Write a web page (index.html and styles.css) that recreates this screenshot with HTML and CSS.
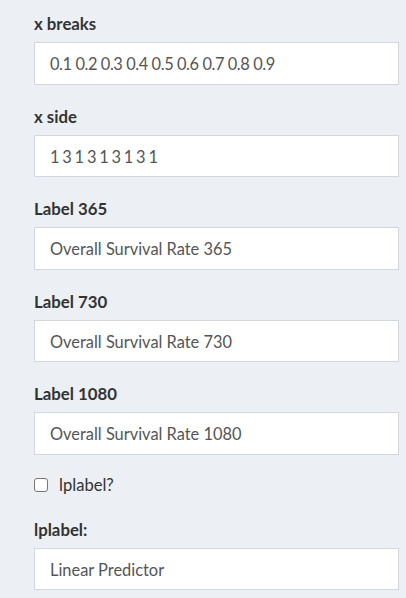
FILE: index.html
```html
<!DOCTYPE html>
<html>
<head>
<meta charset="utf-8">
<link rel="stylesheet" href="styles.css">
</head>
<body>
<div class="sidebar">
  <div class="form-group">
    <label class="control-label">x breaks</label>
    <input class="form-control numeric" type="text" value="0.1 0.2 0.3 0.4 0.5 0.6 0.7 0.8 0.9">
  </div>
  <div class="form-group">
    <label class="control-label">x side</label>
    <input class="form-control numeric-sparse" type="text" value="1 3 1 3 1 3 1 3 1">
  </div>
  <div class="form-group">
    <label class="control-label">Label 365</label>
    <input class="form-control" type="text" value="Overall Survival Rate 365">
  </div>
  <div class="form-group">
    <label class="control-label">Label 730</label>
    <input class="form-control" type="text" value="Overall Survival Rate 730">
  </div>
  <div class="form-group">
    <label class="control-label">Label 1080</label>
    <input class="form-control" type="text" value="Overall Survival Rate 1080">
  </div>
  <div class="checkbox-row">
    <span class="check"></span>
    <span class="check-label">lplabel?</span>
  </div>
  <div class="form-group">
    <label class="control-label">lplabel:</label>
    <input class="form-control" type="text" value="Linear Predictor">
  </div>
</div>
</body>
</html>
```
FILE: styles.css
```css
html, body {
  margin: 0;
  padding: 0;
  background: #ecf0f5;
}
body {
  font-family: Lato, "Open Sans", sans-serif;
  font-size: 16.6px;
  color: #333;
}
.sidebar {
  display: flex;
  flex-direction: column;
  padding: 11px 7px 0 34px;
}
.form-group {
  display: flex;
  flex-direction: column;
  margin-bottom: 18.75px;
}
.control-label {
  font-weight: 700;
  font-size: 16.8px;
  line-height: 25px;
  margin-bottom: 6.25px;
  color: #333;
}
.form-control {
  box-sizing: border-box;
  width: 100%;
  height: 42.5px;
  margin: 0;
  padding: 0 15px;
  border: 1px solid #d2d6de;
  border-radius: 0;
  background: #fff;
  font-family: inherit;
  font-size: 16.4px;
  color: #555;
  outline: none;
}
.numeric {
  letter-spacing: -0.42px;
}
.numeric-sparse {
  letter-spacing: -0.7px;
}
.checkbox-row {
  display: flex;
  align-items: center;
  height: 25px;
  margin-top: -1px;
  margin-bottom: 19px;
}
.check {
  box-sizing: border-box;
  width: 14px;
  height: 14px;
  border: 1px solid #767676;
  border-radius: 3px;
  background: #fff;
  margin-right: 11px;
}
.check-label {
  color: #333;
  line-height: 25px;
}
```
